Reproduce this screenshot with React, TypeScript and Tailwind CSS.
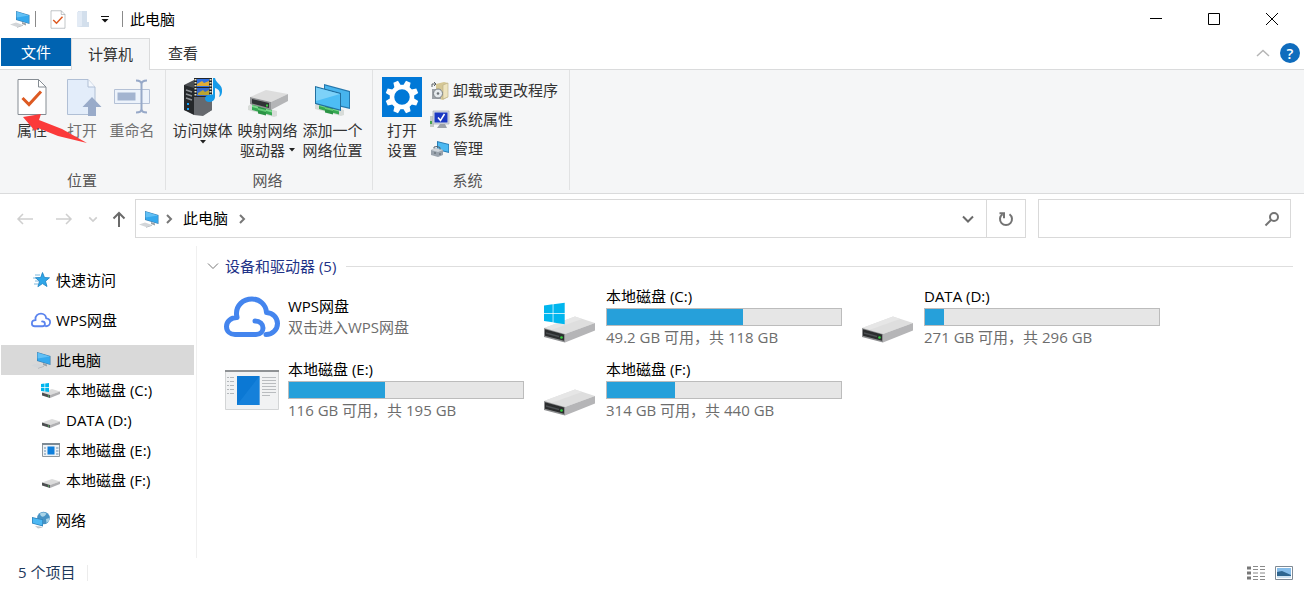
import type { ReactNode } from 'react';

const NAV_DRIVES = [
  { label: '本地磁盘 (C:)', kind: 'system' },
  { label: 'DATA (D:)', kind: 'drive' },
  { label: '本地磁盘 (E:)', kind: 'app' },
  { label: '本地磁盘 (F:)', kind: 'drive' },
];

const DRIVES = [
  { label: '本地磁盘 (C:)', kind: 'system', caption: '49.2 GB 可用，共 118 GB', used: 58 },
  { label: 'DATA (D:)', kind: 'drive', caption: '271 GB 可用，共 296 GB', used: 8 },
  { label: '本地磁盘 (E:)', kind: 'app', caption: '116 GB 可用，共 195 GB', used: 41 },
  { label: '本地磁盘 (F:)', kind: 'drive', caption: '314 GB 可用，共 440 GB', used: 29 },
];

/* ---------- Icons ---------- */

function PcIcon() {
  return (
    <svg viewBox="0 0 20 18" className="h-[18px] w-5 flex-shrink-0" aria-hidden="true">
      <path d="M0 14.500 6 12.500l7 2.500-6 2z" fill="#d3d6d9" />
      <path d="M7 17l6-2v.8L7 17.800z" fill="#aeb3b8" />
      <path d="M12 12l4 1.500v2l-4-1.500z" fill="#9aa2a9" />
      <path d="M6 1l13.500 4V14L6 10z" fill="#3d7fae" />
      <path d="M6.600 1.800 18.900 5.500v7.700L6.600 9.500z" fill="#35a9ee" />
      <path d="M6.600 1.800 18.900 5.500 6.600 7.500z" fill="#62c0f5" />
    </svg>
  );
}

function DriveShape() {
  return (
    <>
      <path d="M2 32 33 20.500 53 27 23 38z" fill="#dedede" />
      <path d="M2 32 33 20.500 40 23 9 34z" fill="#e6e6e6" />
      <path d="M23 38 53 27v7.500L23 46.500z" fill="#b5b5b7" />
      <path d="M2 32l21 6v8.500L2 41z" fill="#8d8e90" />
      <path d="M3 33.300l19 5.300v6.200L3 39.800z" fill="#2b2d2e" />
      <path d="M4 36.200l13 3.600v1.500L4 37.700z" fill="#4c5053" />
      <circle cx="19.500" cy="41.500" r="1.300" fill="#35d03f" />
    </>
  );
}

function DriveIcon({ kind, className }: { kind: string; className: string }) {
  if (kind === 'app') {
    return (
      <svg viewBox="0 0 56 48" className={className} aria-hidden="true">
        <path d="M1.500 1.500h53v39h-53z" fill="#f1f2f3" stroke="#d3d5d6" />
        <path d="M1 1h54v2H1z" fill="#8f9295" />
        <path d="M13 7h22.500v29H13z" fill="#0b78d4" />
        <path d="M35.500 7v29L13 36z" fill="#1c86de" opacity=".6" />
        <path d="M3 8.500h7M3 12.500h7M3 16.500h7M3 20.500h7M3 24.500h7" stroke="#b4b8bb" strokeDasharray="2 1 4 1" />
        <path
          d="M38 8.500h14M38 11.500h14M38 14.500h14M38 17.500h14M38 20.500h14M38 23.500h14M38 26.500h8"
          stroke="#b9bcbf"
        />
      </svg>
    );
  }
  return (
    <svg viewBox="0 0 56 48" className={className} aria-hidden="true">
      <DriveShape />
      {kind === 'system' && (
        <path
          d="M2 9.500 10.700 8.300v9H2zM11.400 8.200 22.700 6.700v10.600H11.400zM2 18h8.700v8.300L2 25zM11.400 18h11.300v10.200L11.400 26.500z"
          fill="#00b6ee"
        />
      )}
    </svg>
  );
}

function SmallDriveIcon({ kind }: { kind: string }) {
  if (kind === 'app') {
    return (
      <svg viewBox="0 0 20 16" className="h-4 w-5 flex-shrink-0" aria-hidden="true">
        <path d="M1.500 1.500h17v13h-17z" fill="#eef2f5" stroke="#8f979d" />
        <path d="M1 1h18v2H1z" fill="#7d8a94" />
        <path d="M6.500 4.500h7v8h-7z" fill="#0f7fdc" />
        <path d="M3 6h2M3 9h2M3 12h2M15 6h2.500M15 9h2.500M15 12h2.500" stroke="#6d8fb0" />
      </svg>
    );
  }
  return (
    <svg viewBox="0 0 20 16" className="h-4 w-5 flex-shrink-0" aria-hidden="true">
      <path d="M1 10.500 11 7l8 2.500L9 13z" fill="#dcdcdc" />
      <path d="M9 13l10-3.500v2.500L9 16z" fill="#b0b0b2" />
      <path d="M1 10.500 9 13v3L1 13.500z" fill="#4d4f51" />
      <path d="M7 13.500h1v1H7z" fill="#58dd60" />
      {kind === 'system' && (
        <path d="M0 2l3.500-.4v3.600H0zM4.200 1.500 8 1v4.200H4.200zM0 6h3.500v3.500L0 9zM4.200 6H8v4l-3.800-.5z" fill="#00b6ee" />
      )}
    </svg>
  );
}

function CloudIcon({ className, color, width }: { className: string; color: string; width: number }) {
  return (
    <svg viewBox="0 0 56 42" className={className} fill="none" aria-hidden="true">
      <path
        d="M42 38.500C48.500 38.500 53.500 33.500 53.500 27.500 53.500 21.500 49 17 42.500 16.500 42 8.500 35.500 3 28 3 19 3 12 9.500 12.500 18.500L13 21.500C7 21.500 2.500 25.500 2.500 30.500 2.500 35.200 6.200 38.500 11 38.500H32C36.500 38.500 39 35.500 39 32 39 28 36 25 31 25"
        stroke={color}
        strokeWidth={width}
        strokeLinecap="round"
        strokeLinejoin="round"
      />
    </svg>
  );
}

function StarIcon() {
  return (
    <svg viewBox="0 0 20 18" className="h-[18px] w-5 flex-shrink-0" aria-hidden="true">
      <path d="M3 4h5M1 7h6M3 10h4M2 13h4" stroke="#7cb8de" />
      <path
        d="M10.500 1.500l2 5 5 .3-4 3.400 1.500 5.300-4.500-2.900-4.600 3.100 1.600-5.500L3.500 6.800l5.200-.3z"
        fill="#2fa6e8"
        stroke="#1a80c1"
        strokeWidth=".8"
      />
    </svg>
  );
}

function NetworkIcon() {
  return (
    <svg viewBox="0 0 20 18" className="h-[18px] w-5 flex-shrink-0" aria-hidden="true">
      <circle cx="12.500" cy="7" r="6.300" fill="#4792c4" />
      <path d="M9 2.500c2-1.500 5-1.200 6.500.2-1 1-1.300 2.300-2.800 2.800C11 6 9 5 9 2.500zM15 8l3.500-1c0 2-1 4-3 5z" fill="#a9d4e8" />
      <path d="M4 15l5 .5 3 1-5 1z" fill="#c2c7cb" />
      <path d="M1 6l11 2.500v7L1 12.500z" fill="#2a7fb8" />
      <path d="M1.700 7l9.600 2.100v5.500L1.700 12z" fill="#4db8f3" />
    </svg>
  );
}

function PropertiesIcon({ className }: { className: string }) {
  return (
    <svg viewBox="0 0 30 38" className={className} fill="none" aria-hidden="true">
      <path d="M1 1.500h20.500L29 9v27.500H1z" fill="#fff" stroke="#858c93" />
      <path d="M21.500 1.500V9H29" stroke="#858c93" />
      <path d="M5.500 20l6.500 6.500L24 13.500" stroke="#dd5a22" strokeWidth="3" />
    </svg>
  );
}

function OpenIcon() {
  return (
    <svg viewBox="0 0 36 38" className="ml-1 h-[38px] w-9" aria-hidden="true">
      <path d="M1.500 1.500H22L29 9v27.500H1.500z" fill="#e3edfa" stroke="#b0bfd5" />
      <path d="M22 1.500V9h7" fill="#f4f8fd" stroke="#b0bfd5" />
      <path d="M26 19l9.500 10H30v9h-8v-9h-5.500z" fill="#99abc9" />
    </svg>
  );
}

function RenameIcon() {
  return (
    <svg viewBox="0 0 38 38" className="size-[38px]" fill="none" aria-hidden="true">
      <path d="M1.500 11.500h35v14h-35z" fill="#edf3fb" stroke="#b4c1d6" />
      <path d="M4.500 14.500h18v8h-18z" fill="#a3b4d0" />
      <path
        d="M23 2.500c3 0 5.500 1 5.500 3.500v25c0 2.500-2.500 3.500-5.500 3.500M34 2.500c-3 0-5.500 1-5.500 3.500v25c0 2.500 2.500 3.500 5.500 3.500"
        stroke="#97a9c8"
        strokeWidth="2"
      />
    </svg>
  );
}

function MediaIcon() {
  return (
    <svg viewBox="0 0 42 40" className="h-10 w-[42px]" aria-hidden="true">
      <path d="M2 8l10-5 18 4v26l-9 5L2 33z" fill="#4c4f53" />
      <path d="M2 8l10 3v27L2 33z" fill="#25282b" />
      <path d="M12 11l18-3v25l-9 6-9-1z" fill="#66696e" />
      <path d="M4 13l6 2M4 17l6 2M4 21l6 2" stroke="#8c9196" strokeWidth="1.500" />
      <path d="M5 26h2v2H5zM5 31h2v2H5z" fill="#19a6ff" />
      <path d="M12 1h18v19H12z" fill="#20242a" />
      <path d="M15 2h12v8H15z" fill="#2e6fe2" />
      <path d="M15 7l5-3 2 2 5-2v5H15z" fill="#e0ac37" />
      <path d="M15 11h12v8H15z" fill="#3568cc" />
      <path d="M16 16l5-3 2 2 4-2v5H16z" fill="#b9a431" />
      <path d="M13.500 2v18M28.500 2v18" stroke="#e6e1c5" strokeWidth="2" strokeDasharray="1.500 1.500" />
      <path d="M31 1h2c1 6 8 6 7 14-.5 3-1 4-3 5 2-5 0-8-4-9v9c0 3-3 5-6 5-2.500 0-4-1.500-4-3.500 0-2.500 3-4 8-4z" fill="#169be8" />
    </svg>
  );
}

function Pipe() {
  return (
    <>
      <path d="M0 27l3-2 26 7v5l-3 1-26-7z" fill="#d8dcd9" />
      <path d="M4 25l20 5.500v6L4 31z" fill="#35a852" />
      <path d="M4 26l20 5.500v2L4 28z" fill="#7bd98c" />
      <path d="M10 27.500l8 2v7l-8-2z" fill="#2b9445" />
      <path d="M10 29l8 2v2l-8-2z" fill="#62cb76" />
    </>
  );
}

function MapDriveIcon() {
  return (
    <svg viewBox="0 0 42 40" className="h-10 w-[42px]" aria-hidden="true">
      <g transform="translate(1 2)">
        <Pipe />
      </g>
      <path d="M3 20l16-7 22 4-17 8z" fill="#dddddd" />
      <path d="M24 25l17-8v7l-17 9z" fill="#b4b5b7" />
      <path d="M3 20l21 5v8L3 27z" fill="#8f9193" />
      <path d="M5 22l17 4v5L5 26.500z" fill="#303335" />
      <path d="M19 27.500h2v2h-2z" fill="#35d03f" />
    </svg>
  );
}

function AddLocationIcon() {
  return (
    <svg viewBox="0 0 42 40" className="h-10 w-[42px]" aria-hidden="true">
      <g transform="translate(3 1)">
        <Pipe />
      </g>
      <path d="M12 7l26 7v18l-26-6z" fill="#2678ad" />
      <path d="M13 8.500l24 6.500v15.500L13 25z" fill="#47b4ed" />
      <path d="M3 9l26 7v18L3 27z" fill="#226f9f" />
      <path d="M4 10.500l24 6.500v15.500L4 26z" fill="#4dbdf5" />
      <path d="M4 10.500l24 6.500L4 24z" fill="#7dd1f8" />
    </svg>
  );
}

function SettingsIcon() {
  return (
    <svg viewBox="0 0 40 40" className="size-10 bg-[#0078d7]" fill="none" aria-hidden="true">
      <circle cx="20" cy="20" r="10" stroke="#fff" strokeWidth="4.500" />
      {[22.5, 67.5, 112.5, 157.5, 202.5, 247.5, 292.5, 337.5].map((deg) => (
        <path key={deg} d="M17.500 3.500h5l1 6h-7z" fill="#fff" transform={`rotate(${deg} 20 20)`} />
      ))}
    </svg>
  );
}

function UninstallIcon() {
  return (
    <svg viewBox="0 0 20 20" className="size-5" aria-hidden="true">
      <path d="M6 3l8-2 4 1v14l-5 3-7-2z" fill="#d5c795" />
      <path d="M13 4l5-2v14l-5 2z" fill="#eee4bf" stroke="#b5ab85" strokeWidth=".6" />
      <path d="M2 6V3h4M4 1l2 2-2 2" stroke="#5b6065" fill="none" />
      <path d="M2 8h9v10H2z" fill="#9ca1a6" />
      <circle cx="8" cy="12.500" r="4.500" fill="#e6eaed" stroke="#7c8287" />
      <circle cx="8" cy="12.500" r="1.300" fill="#6c7277" />
    </svg>
  );
}

function SystemIcon() {
  return (
    <svg viewBox="0 0 20 20" className="size-5" aria-hidden="true">
      <path d="M0 6h4v11H0z" fill="#c3cac5" />
      <path d="M0 11h2v3H0z" fill="#46a54e" />
      <path d="M10 14h5l2 4H7z" fill="#9ca2a9" />
      <path d="M3 1h16v13H3z" fill="#d7dce2" stroke="#9ca3ae" strokeWidth=".6" />
      <path d="M4.500 2.500h13v10h-13z" fill="#1b38c2" />
      <path d="M8 7.500l2.500 3 4-6.500" stroke="#fff" strokeWidth="1.500" fill="none" />
    </svg>
  );
}

function ManageIcon() {
  return (
    <svg viewBox="0 0 20 20" className="size-5" aria-hidden="true">
      <path d="M7 2l12 3v9L7 11z" fill="#2b7db4" />
      <path d="M8 3.300l10.300 2.500v7L8 10.300z" fill="#4cb9f2" />
      <path d="M1 11l5-2 7 2v5l-5 2-7-2z" fill="#9aa3ad" />
      <path d="M1 11l5-2 7 2-5 2z" fill="#cfd5db" />
      <path d="M4 9.500V8l3-.5 3 1v2M4 14h2M9 15h2" stroke="#59626b" fill="none" />
    </svg>
  );
}

function Chevron({ d, className }: { d: string; className: string }) {
  return (
    <svg viewBox="0 0 12 12" className={className} fill="none" stroke="currentColor" aria-hidden="true">
      <path d={d} />
    </svg>
  );
}

function Caret() {
  return (
    <svg viewBox="0 0 6 4" className="h-1 w-1.5" aria-hidden="true">
      <path d="M0 0h6L3 3.500z" fill="#222" />
    </svg>
  );
}

/* ---------- Ribbon ---------- */

function RibbonGroup({ label, className, children }: { label: string; className: string; children: ReactNode }) {
  return (
    <section className={`flex flex-col border-r border-[#e1e2e3] pt-1.5 ${className}`} aria-label={label}>
      <div className="flex flex-1 items-start">{children}</div>
      <div className="text-center leading-5 text-[#555]">{label}</div>
    </section>
  );
}

interface RibbonButtonProps {
  icon: ReactNode;
  className: string;
  disabled?: boolean;
  children: ReactNode;
}

function RibbonButton({ icon, className, disabled, children }: RibbonButtonProps) {
  return (
    <button
      type="button"
      disabled={disabled}
      className={`relative flex flex-col items-center whitespace-nowrap leading-5 text-[#333] disabled:text-[#707070] ${className}`}
    >
      <span className="mb-0.5 flex h-[42px] items-center">{icon}</span>
      {children}
    </button>
  );
}

function Ribbon() {
  return (
    <div className="flex h-[125px] border-y border-[#dadbdc] bg-[#f5f6f7] pb-[3px]">
      <RibbonGroup label="位置" className="pl-[7px] pr-2">
        <RibbonButton icon={<PropertiesIcon className="h-[38px] w-[30px]" />} className="w-[50px]">
          属性
          {/* Pointer drawn over the button */}
          <svg viewBox="0 0 66 32" className="absolute left-[15px] top-[37px] z-10 h-8 w-[66px]" aria-hidden="true">
            <path d="M1 4 19 1 17 7 40 16 65 30 36 23 16 15 13 18z" fill="#fb3a3a" />
          </svg>
        </RibbonButton>
        <RibbonButton icon={<OpenIcon />} className="w-[50px]" disabled>
          打开
        </RibbonButton>
        <RibbonButton icon={<RenameIcon />} className="w-[50px]" disabled>
          重命名
        </RibbonButton>
      </RibbonGroup>

      <RibbonGroup label="网络" className="pl-1 pr-[7px]">
        <RibbonButton icon={<MediaIcon />} className="w-[65px]">
          访问媒体
          <Caret />
        </RibbonButton>
        <RibbonButton icon={<MapDriveIcon />} className="w-[65px]">
          <span>映射网络</span>
          <span className="flex items-center gap-1">
            驱动器 <Caret />
          </span>
        </RibbonButton>
        <RibbonButton icon={<AddLocationIcon />} className="w-[65px]">
          <span>添加一个</span>
          <span>网络位置</span>
        </RibbonButton>
      </RibbonGroup>

      <RibbonGroup label="系统" className="pl-1 pr-[11px]">
        <RibbonButton icon={<SettingsIcon />} className="w-[50px]">
          <span>打开</span>
          <span>设置</span>
        </RibbonButton>
        <div className="flex flex-col pl-[3px] text-[#333]">
          <button type="button" className="flex h-[29px] items-center gap-[3px]">
            <UninstallIcon />
            卸载或更改程序
          </button>
          <button type="button" className="flex h-[29px] items-center gap-[3px]">
            <SystemIcon />
            系统属性
          </button>
          <button type="button" className="flex h-[29px] items-center gap-[3px]">
            <ManageIcon />
            管理
          </button>
        </div>
      </RibbonGroup>
    </div>
  );
}

/* ---------- Window chrome ---------- */

function TitleBar() {
  return (
    <header className="flex h-[38px] items-center pl-2.5 pr-[3px]">
      <PcIcon />
      <span className="ml-[5px] h-4 w-px bg-[#8a8a8a]" />
      <button type="button" aria-label="属性" className="ml-3.5">
        <PropertiesIcon className="h-[19px] w-4" />
      </button>
      <button type="button" aria-label="新建文件夹" className="ml-2.5">
        <svg viewBox="0 0 14 18" className="h-[18px] w-3.5" aria-hidden="true">
          <path d="M2 1h9v11h2v5H2z" fill="#d3dfec" />
          <path d="M1 2l5-1v15l-5 1z" fill="#e3ebf5" />
        </svg>
      </button>
      <button type="button" aria-label="自定义快速访问工具栏" className="ml-[11px]">
        <svg viewBox="0 0 8 8" className="size-2" aria-hidden="true">
          <path d="M0 1.500h8" stroke="#111" />
          <path d="M.5 4h7L4 7.500z" fill="#111" />
        </svg>
      </button>
      <span className="ml-[13px] h-4 w-px bg-[#8a8a8a]" />
      <h1 className="ml-[7px] text-black">此电脑</h1>
      <div className="ml-auto flex self-stretch text-black">
        <button type="button" aria-label="最小化" className="flex w-[58px] items-center justify-center">
          <Chevron d="M0 5.500h12" className="size-3" />
        </button>
        <button type="button" aria-label="最大化" className="flex w-[58px] items-center justify-center">
          <Chevron d="M.5.5h11v11H.5z" className="size-3" />
        </button>
        <button type="button" aria-label="关闭" className="flex w-[58px] items-center justify-center">
          <Chevron d="M0 0l12 12M12 0 0 12" className="size-3" />
        </button>
      </div>
    </header>
  );
}

function Tabs() {
  return (
    <nav className="flex h-[31px] pl-px pr-1" aria-label="功能区选项卡">
      <button type="button" className="h-7 w-[70px] bg-[#0063b1] text-white">
        文件
      </button>
      <button
        type="button"
        className="relative -mb-px w-[79px] border-x border-t border-[#dadbdc] bg-[#f5f6f7] text-[#333]"
      >
        计算机
      </button>
      <button type="button" className="w-[66px] text-[#333]">
        查看
      </button>
      <div className="ml-auto flex items-center gap-2.5 pb-0.5">
        <button type="button" aria-label="最小化功能区" className="text-[#b5b5b5]">
          <Chevron d="M0 9l6-5.500L12 9" className="h-3 w-3.5 stroke-[1.5]" />
        </button>
        <button
          type="button"
          aria-label="帮助"
          className="flex size-5 items-center justify-center rounded-full bg-[#0f6cbd] text-[15px] leading-5 font-semibold text-white"
        >
          ?
        </button>
      </div>
    </nav>
  );
}

function AddressBar() {
  return (
    <div className="flex h-[52px] items-start pl-4 pr-[13px] pt-[5px]">
      <div className="flex h-[39px] w-[119px] items-center text-[#cfcfcf]">
        <button type="button" aria-label="后退">
          <svg viewBox="0 0 18 14" className="h-3.5 w-[18px]" fill="none" stroke="currentColor" strokeWidth="1.500">
            <path d="M17 7H2M7 2 2 7l5 5" />
          </svg>
        </button>
        <button type="button" aria-label="前进" className="ml-[21px]">
          <svg viewBox="0 0 18 14" className="h-3.5 w-[18px]" fill="none" stroke="currentColor" strokeWidth="1.500">
            <path d="M1 7h15M11 2l5 5-5 5" />
          </svg>
        </button>
        <button type="button" aria-label="最近浏览的位置" className="ml-[15px]">
          <Chevron d="M1.500 4 6 8.500 10.500 4" className="size-2.5 stroke-2" />
        </button>
        <button type="button" aria-label="向上" className="ml-3.5 text-[#6a6a6a]">
          <svg viewBox="0 0 14 18" className="h-[18px] w-3.5" fill="none" stroke="currentColor" strokeWidth="2">
            <path d="M7 17V3M1.500 8.500 7 3l5.500 5.500" />
          </svg>
        </button>
      </div>

      <div className="flex h-[39px] flex-1 items-center border border-[#d9d9d9] pl-[3px]">
        <PcIcon />
        <Chevron d="M4 2l4 4-4 4" className="ml-1 size-3 stroke-2 text-[#777]" />
        <button type="button" className="ml-2 text-black">
          此电脑
        </button>
        <Chevron d="M4 2l4 4-4 4" className="ml-2 size-3 stroke-2 text-[#777]" />
        <button
          type="button"
          aria-label="以前的位置"
          className="ml-auto flex w-9 items-center justify-center text-[#6a6a6a]"
        >
          <Chevron d="M1 3.500l5 5 5-5" className="size-3 stroke-2" />
        </button>
        <button
          type="button"
          aria-label="刷新"
          className="flex w-[39px] items-center justify-center self-stretch border-l border-[#d9d9d9] text-[#737373]"
        >
          <svg viewBox="0 0 16 16" className="size-4" fill="none" stroke="currentColor" strokeWidth="2">
            <path d="M4.500 3.200A6 6 0 1 0 11.500 3.200M1.500 2.200H6v5" />
          </svg>
        </button>
      </div>

      <div className="ml-3 flex h-[39px] w-[253px] items-center border border-[#d9d9d9] pl-2 pr-2.5">
        <input type="text" aria-label="搜索此电脑" className="min-w-0 flex-1 bg-transparent outline-none" />
        <button type="button" aria-label="搜索" className="text-[#737373]">
          <svg viewBox="0 0 16 16" className="size-4" fill="none" stroke="currentColor" strokeWidth="2">
            <circle cx="10" cy="6" r="4" />
            <path d="M7 9l-5.500 5.500" />
          </svg>
        </button>
      </div>
    </div>
  );
}

/* ---------- Body ---------- */

function NavItem({ icon, children, className = '' }: { icon: ReactNode; children: ReactNode; className?: string }) {
  return (
    <a href="#" className={`flex h-[30px] items-center ${className}`}>
      {icon}
      {children}
    </a>
  );
}

function NavPane() {
  return (
    <nav
      className="flex w-[197px] flex-shrink-0 flex-col border-r border-[#f0f0f0] pl-px pr-0.5 pt-[19px]"
      aria-label="导航窗格"
    >
      <NavItem icon={<StarIcon />} className="mb-2.5 gap-1 pl-[31px]">
        快速访问
      </NavItem>
      <NavItem
        icon={<CloudIcon className="h-4 w-5 flex-shrink-0" color="#5b84ee" width={5} />}
        className="mb-2.5 gap-[5px] pl-[30px]"
      >
        WPS网盘
      </NavItem>
      <NavItem icon={<PcIcon />} className="gap-[5px] bg-[#d9d9d9] pl-[30px]">
        此电脑
      </NavItem>
      {NAV_DRIVES.map(({ label, kind }) => (
        <NavItem key={label} icon={<SmallDriveIcon kind={kind} />} className="gap-[5px] pl-10">
          {label}
        </NavItem>
      ))}
      <NavItem icon={<NetworkIcon />} className="mt-2.5 gap-[5px] pl-[30px]">
        网络
      </NavItem>
    </nav>
  );
}

function DriveList() {
  return (
    <main className="min-w-0 flex-1 pt-2.5">
      <h2 className="flex h-5 items-center pl-2.5 pr-[11px] text-[#1e3287]">
        <Chevron d="M1 3.500l5 5 5-5" className="size-3 text-[#777]" />
        <span className="ml-1.5 whitespace-nowrap">设备和驱动器 (5)</span>
        <span className="ml-2.5 h-px flex-1 bg-[#dedede]" />
      </h2>
      <ul className="grid grid-cols-[repeat(auto-fill,318px)] pl-[19px] pt-2.5">
        <li className="flex h-[73px]">
          <div className="flex w-[72px] justify-center pt-2.5">
            <CloudIcon className="h-[42px] w-14" color="#4485ee" width={5} />
          </div>
          <div className="pt-2.5 leading-5">
            <div>WPS网盘</div>
            <div className="pt-px text-[#6d6d6d]">双击进入WPS网盘</div>
          </div>
        </li>
        {DRIVES.map(({ label, kind, caption, used }) => (
          <li key={label} className="flex h-[73px]">
            <div className="flex w-[72px] justify-center pt-2.5">
              <DriveIcon kind={kind} className="h-12 w-14" />
            </div>
            <div className="w-[236px] leading-5">
              <div>{label}</div>
              <div
                role="progressbar"
                aria-label={label}
                aria-valuenow={used}
                className="mb-px mt-0.5 h-[18px] border border-[#bcbcbc] bg-[#e6e6e6]"
              >
                <div className="h-full bg-[#26a0da]" style={{ width: `${used}%` }} />
              </div>
              <div className="text-[#6d6d6d]">{caption}</div>
            </div>
          </li>
        ))}
      </ul>
    </main>
  );
}

function StatusBar() {
  return (
    <footer className="flex h-[31px] items-center pb-0.5 pl-[18px] pr-[11px] text-[#1e395b]">
      <span>5 个项目</span>
      <span className="ml-3 h-4 w-px bg-[#ececec]" />
      <div className="ml-auto flex gap-2.5">
        <button type="button" aria-label="详细信息">
          <svg viewBox="0 0 18 14" className="h-3.5 w-[18px]" fill="none" aria-hidden="true">
            <path d="M0 .5h4v3H0zM0 5.500h4v3H0zM0 10.500h4v3H0z" fill="#777" />
            <path
              d="M6 .5h5M13 .5h5M6 3.500h5M13 3.500h5M6 7h5M13 7h5M6 10.500h5M13 10.500h5M6 13.500h5M13 13.500h5"
              stroke="#8a8a8a"
            />
          </svg>
        </button>
        <button type="button" aria-label="大缩略图">
          <svg viewBox="0 0 18 14" className="h-3.5 w-[18px]" aria-hidden="true">
            <path d="M.5.5h17v13H.5z" fill="#fff" stroke="#7f8a95" />
            <path d="M2 2h14v10H2z" fill="#86bdea" />
            <path d="M2 6l5-1 9 4v3H2z" fill="#2f6690" />
            <path d="M2 10h14v2H2z" fill="#cfe3f2" />
          </svg>
        </button>
      </div>
    </footer>
  );
}

export default function App() {
  return (
    <div className="flex min-h-screen flex-col bg-white font-['Open_Sans','Noto_Sans_CJK_SC',sans-serif] text-[15px] text-black">
      <TitleBar />
      <Tabs />
      <Ribbon />
      <AddressBar />
      <div className="flex flex-1">
        <NavPane />
        <DriveList />
      </div>
      <StatusBar />
    </div>
  );
}
